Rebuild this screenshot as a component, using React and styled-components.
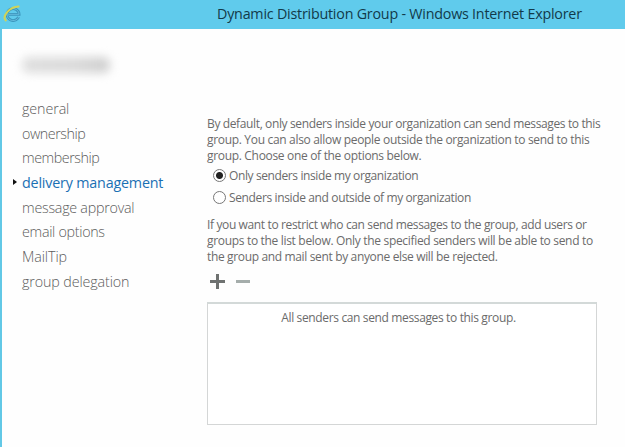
import { useState } from "react";
import styled, { createGlobalStyle } from "styled-components";

const GlobalStyle = createGlobalStyle`
  * {
    box-sizing: border-box;
  }

  body {
    margin: 0;
    font-family: "Open Sans", "Noto Sans", sans-serif;
    background: #fefefe;
    overflow: hidden;
  }
`;

const Window = styled.div`
  display: flex;
  flex-direction: column;
  height: 447px;
  background: #fefefe;
`;

const TitleBar = styled.header`
  display: flex;
  align-items: center;
  height: 29px;
  padding-left: 3px;
  background: #60cbec;
`;

const IeIcon = styled.svg`
  width: 18px;
  height: 18px;
  margin-top: -3px;
`;

const Title = styled.h1`
  margin: -1px 0 0 196px;
  font-size: 14.3px;
  font-weight: 400;
  line-height: 26px;
  letter-spacing: -0.22px;
  white-space: nowrap;
  color: #123a4a;
`;

const Page = styled.div`
  display: flex;
  flex: 1;
  border-left: 2px solid #62c8e6;
`;

const Sidebar = styled.aside`
  width: 205px;
  padding: 28px 0 0 11px;
`;

const GroupName = styled.div`
  width: 88px;
  height: 16px;
  margin: 0 0 23px 9px;
  border-radius: 7px;
  background: linear-gradient(90deg, #dedede, #dadada 60%, #cecece);
  filter: blur(5px);
`;

const NavItem = styled.button`
  display: flex;
  align-items: center;
  height: 24.7px;
  padding: 0;
  border: none;
  background: none;
  font-family: inherit;
  font-size: 14.3px;
  font-weight: ${({ $active }) => ($active ? 400 : 300)};
  letter-spacing: ${({ $spacing }) => $spacing || 0}px;
  white-space: nowrap;
  color: ${({ $active }) => ($active ? "#1a70b4" : "#5c5c5c")};
  cursor: pointer;

  &::before {
    content: "";
    width: 0;
    height: 0;
    margin-right: 5px;
    border: 3.5px solid transparent;
    border-right-width: 0;
    border-left: 4px solid ${({ $active }) => ($active ? "#111" : "transparent")};
  }
`;

const Content = styled.main`
  width: 390px;
  padding-top: 87px;
`;

const Paragraph = styled.p`
  margin: 0;
  font-size: 12px;
  line-height: 15.9px;
  color: #6b6b6b;
`;

const Line = styled.span`
  display: block;
  letter-spacing: ${({ $spacing }) => $spacing || 0}px;
  white-space: nowrap;
`;

const Options = styled.div`
  padding: 0 0 8px 6px;
`;

const Option = styled.label`
  display: flex;
  align-items: center;
  gap: 3px;
  height: 22.7px;
  font-size: 12px;
  letter-spacing: ${({ $spacing }) => $spacing || 0}px;
  white-space: nowrap;
  color: #6b6b6b;
`;

const Radio = styled.input`
  appearance: none;
  width: 13px;
  height: 13px;
  margin: 0;
  border: 1px solid #777;
  border-radius: 50%;
  background: #fff;

  &:checked {
    background: radial-gradient(circle, #222 3px, #fff 4px);
  }
`;

const Toolbar = styled.div`
  display: flex;
  gap: 11px;
  height: 37px;
  padding: 9px 0 0 3px;
`;

const ToolButton = styled.button`
  width: 15px;
  height: 15px;
  padding: 0;
  border: none;
  background: none;

  svg {
    display: block;
  }
`;

const SenderList = styled.div`
  height: 123px;
  padding: 6px 7px 0 0;
  border: 1px solid #d4d6d6;
  border-top: 2px solid #d3d9d8;
  background: #fff;
  font-size: 12px;
  line-height: 16px;
  letter-spacing: -0.36px;
  text-align: center;
  color: #6b6b6b;
`;

const sections = [
  { label: "general", spacing: -0.1 },
  { label: "ownership", spacing: -0.45 },
  { label: "membership", spacing: -0.45 },
  { label: "delivery management", spacing: -0.18 },
  { label: "message approval", spacing: -0.25 },
  { label: "email options", spacing: -0.3 },
  { label: "MailTip", spacing: -0.1 },
  { label: "group delegation", spacing: -0.12 },
];

const intro = [
  { text: "By default, only senders inside your organization can send messages to this", spacing: -0.37 },
  { text: "group. You can also allow people outside the organization to send to this", spacing: -0.32 },
  { text: "group. Choose one of the options below.", spacing: -0.32 },
];

const restriction = [
  { text: "If you want to restrict who can send messages to the group, add users or", spacing: -0.37 },
  { text: "groups to the list below. Only the specified senders will be able to send to", spacing: -0.32 },
  { text: "the group and mail sent by anyone else will be rejected.", spacing: -0.35 },
];

const options = [
  { value: "inside", label: "Only senders inside my organization", spacing: -0.39 },
  { value: "all", label: "Senders inside and outside of my organization", spacing: -0.37 },
];

function TextBlock({ lines }) {
  return (
    <Paragraph>
      {lines.map(({ text, spacing }) => (
        <Line key={text} $spacing={spacing}>{text}</Line>
      ))}
    </Paragraph>
  );
}

export default function App() {
  const [section, setSection] = useState("delivery management");
  const [senders, setSenders] = useState("inside");

  return (
    <Window>
      <GlobalStyle />
      <TitleBar>
        <IeIcon viewBox="0 0 18 18" fill="none">
          <path d="M15.6 13A6 6 0 1 1 16.1 10.3H6" stroke="#3b96bd" strokeWidth="2.8" />
          <path d="M15.6 13A6 6 0 1 1 16.1 10.3H6" stroke="#6fc4e6" strokeWidth="0.8" />
          <path d="M2.8 16.4C-1.2 13 6.2 2.6 15.6 2.4" stroke="#d0d458" strokeWidth="2" strokeLinecap="round" />
        </IeIcon>
        <Title>Dynamic Distribution Group - Windows Internet Explorer</Title>
      </TitleBar>
      <Page>
        <Sidebar>
          <GroupName />
          <nav>
            {sections.map(({ label, spacing }) => (
              <NavItem
                key={label}
                $active={label === section}
                $spacing={spacing}
                onClick={() => setSection(label)}
              >
                {label}
              </NavItem>
            ))}
          </nav>
        </Sidebar>
        <Content>
          <TextBlock lines={intro} />
          <Options>
            {options.map(({ value, label, spacing }) => (
              <Option key={value} $spacing={spacing}>
                <Radio
                  type="radio"
                  name="senders"
                  checked={senders === value}
                  onChange={() => setSenders(value)}
                />
                {label}
              </Option>
            ))}
          </Options>
          <TextBlock lines={restriction} />
          <Toolbar>
            <ToolButton>
              <svg width="15" height="15" viewBox="0 0 15 15">
                <path d="M0 7.5h15M7.5 0v15" stroke="#6f7271" strokeWidth="3" />
              </svg>
            </ToolButton>
            <ToolButton>
              <svg width="15" height="15" viewBox="0 0 15 15">
                <path d="M0 7.5h14" stroke="#a5adab" strokeWidth="3" />
              </svg>
            </ToolButton>
          </Toolbar>
          <SenderList>All senders can send messages to this group.</SenderList>
        </Content>
      </Page>
    </Window>
  );
}
